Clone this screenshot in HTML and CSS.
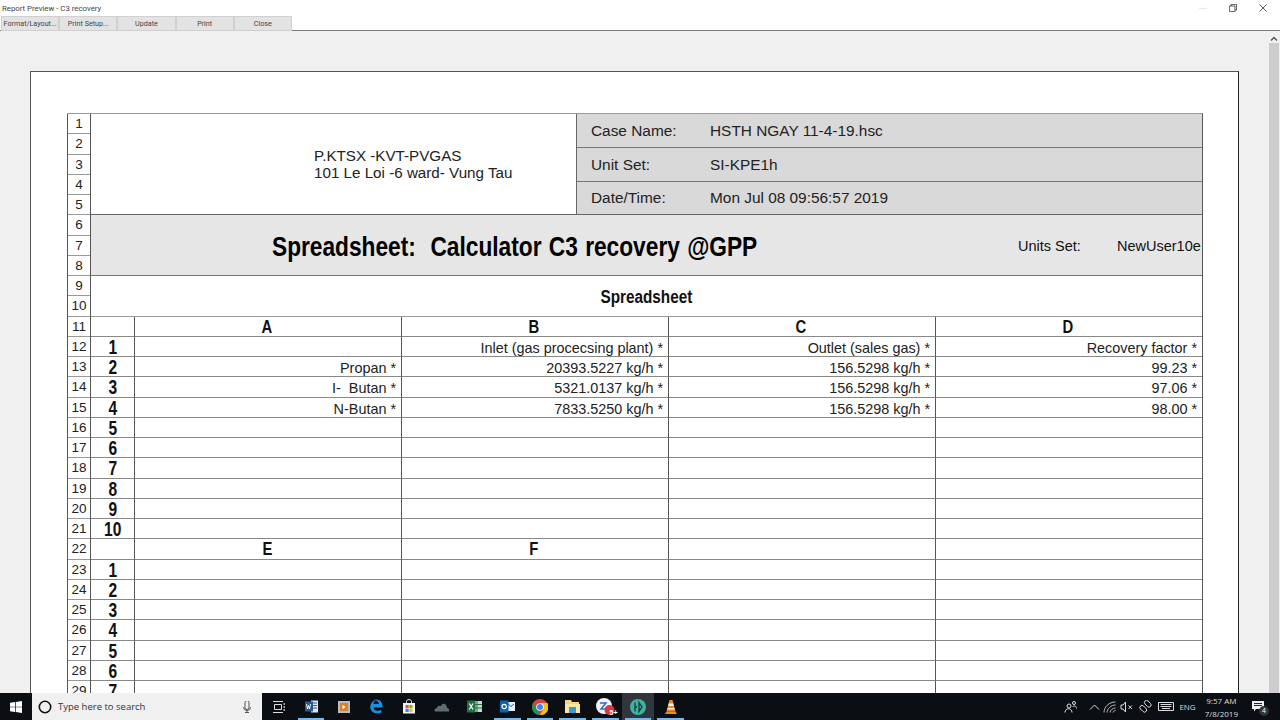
FILE: index.html
```html
<!DOCTYPE html>
<html lang="en">

<head>
    <meta charset="UTF-8">
    <title>Report Preview - C3 recovery</title>
    <link rel="stylesheet" href="styles.css">
</head>

<body>
    <div class="titlebar">
        <span class="title-text">Report Preview - C3 recovery</span>
        <div class="win-btns">
            <svg width="10" height="10" viewBox="0 0 10 10"><path d="M0 5.500h10" stroke="#ddd" fill="none"/></svg>
            <svg width="10" height="10" viewBox="0 0 10 10"><path d="M.5 2.500h7v7h-7zM2.500 2.500v-2h7v7h-2" stroke="#333" fill="none"/></svg>
            <svg width="10" height="10" viewBox="0 0 10 10"><path d="M.5.5l9 9M9.500.5l-9 9" stroke="#333" fill="none"/></svg>
        </div>
    </div>

    <div class="toolbar">
        <button class="tool-btn">Format/Layout...</button>
        <button class="tool-btn">Print Setup...</button>
        <button class="tool-btn">Update</button>
        <button class="tool-btn">Print</button>
        <button class="tool-btn">Close</button>
    </div>

    <div class="workspace">
        <div class="page">
            <div class="sheet">
                <div class="rownums">
                    <div>1</div><div>2</div><div>3</div><div>4</div><div>5</div>
                    <div>6</div><div>7</div><div>8</div><div>9</div><div>10</div>
                    <div>11</div><div>12</div><div>13</div><div>14</div><div>15</div>
                    <div>16</div><div>17</div><div>18</div><div>19</div><div>20</div>
                    <div>21</div><div>22</div><div>23</div><div>24</div><div>25</div>
                    <div>26</div><div>27</div><div>28</div><div>29</div>
                </div>
                <div class="content">
                    <div class="head-block">
                        <div class="company">P.KTSX -KVT-PVGAS<br>101 Le Loi -6 ward- Vung Tau</div>
                        <div class="case-info">
                            <div class="case-row"><span class="case-label">Case Name:</span><span>HSTH NGAY 11-4-19.hsc</span></div>
                            <div class="case-row"><span class="case-label">Unit Set:</span><span>SI-KPE1h</span></div>
                            <div class="case-row"><span class="case-label">Date/Time:</span><span>Mon Jul 08 09:56:57 2019</span></div>
                        </div>
                    </div>
                    <div class="title-band">
                        <div class="report-title">Spreadsheet:&nbsp; Calculator C3 recovery @GPP</div>
                        <div class="units-label">Units Set:</div>
                        <div class="units-value">NewUser10e</div>
                    </div>
                    <div class="section-title"><span>Spreadsheet</span></div>

                    <div class="grid">
                        <div class="idx"></div><div class="colhead"><span>A</span></div><div class="colhead"><span>B</span></div><div class="colhead"><span>C</span></div><div class="colhead"><span>D</span></div>
                        <div class="idx"><span>1</span></div><div class="cell"></div><div class="cell">Inlet (gas procecsing plant) *</div><div class="cell">Outlet (sales gas) *</div><div class="cell">Recovery factor *</div>
                        <div class="idx"><span>2</span></div><div class="cell">Propan *</div><div class="cell">20393.5227 kg/h *</div><div class="cell">156.5298 kg/h *</div><div class="cell">99.23 *</div>
                        <div class="idx"><span>3</span></div><div class="cell">I-&nbsp; Butan *</div><div class="cell">5321.0137 kg/h *</div><div class="cell">156.5298 kg/h *</div><div class="cell">97.06 *</div>
                        <div class="idx"><span>4</span></div><div class="cell">N-Butan *</div><div class="cell">7833.5250 kg/h *</div><div class="cell">156.5298 kg/h *</div><div class="cell">98.00 *</div>
                        <div class="idx"><span>5</span></div><div class="cell"></div><div class="cell"></div><div class="cell"></div><div class="cell"></div>
                        <div class="idx"><span>6</span></div><div class="cell"></div><div class="cell"></div><div class="cell"></div><div class="cell"></div>
                        <div class="idx"><span>7</span></div><div class="cell"></div><div class="cell"></div><div class="cell"></div><div class="cell"></div>
                        <div class="idx"><span>8</span></div><div class="cell"></div><div class="cell"></div><div class="cell"></div><div class="cell"></div>
                        <div class="idx"><span>9</span></div><div class="cell"></div><div class="cell"></div><div class="cell"></div><div class="cell"></div>
                        <div class="idx"><span>10</span></div><div class="cell"></div><div class="cell"></div><div class="cell"></div><div class="cell"></div>
                        <div class="idx"></div><div class="colhead"><span>E</span></div><div class="colhead"><span>F</span></div><div class="colhead"></div><div class="colhead"></div>
                        <div class="idx"><span>1</span></div><div class="cell"></div><div class="cell"></div><div class="cell"></div><div class="cell"></div>
                        <div class="idx"><span>2</span></div><div class="cell"></div><div class="cell"></div><div class="cell"></div><div class="cell"></div>
                        <div class="idx"><span>3</span></div><div class="cell"></div><div class="cell"></div><div class="cell"></div><div class="cell"></div>
                        <div class="idx"><span>4</span></div><div class="cell"></div><div class="cell"></div><div class="cell"></div><div class="cell"></div>
                        <div class="idx"><span>5</span></div><div class="cell"></div><div class="cell"></div><div class="cell"></div><div class="cell"></div>
                        <div class="idx"><span>6</span></div><div class="cell"></div><div class="cell"></div><div class="cell"></div><div class="cell"></div>
                        <div class="idx"><span>7</span></div><div class="cell"></div><div class="cell"></div><div class="cell"></div><div class="cell"></div>
                    </div>
                </div>
            </div>
        </div>
        <div class="scrollbar">
            <svg width="8" height="6" viewBox="0 0 8 6"><path d="M1 4.500l3-3 3 3" stroke="#505050" stroke-width="1.300" fill="none"/></svg>
            <div class="scroll-thumb"></div>
        </div>
    </div>

    <div class="taskbar">
        <div class="start">
            <svg width="12" height="12" viewBox="0 0 12 12"><path d="M0 1.700l5-.7v4.700H0zM5.700.9L12 0v5.700H5.700zM0 6.300h5V11l-5-.7zM5.700 6.300H12V12l-6.300-.9z" fill="#fff"/></svg>
        </div>
        <div class="searchbox">
            <svg width="14" height="14" viewBox="0 0 14 14"><circle cx="7" cy="7" r="5.700" stroke="#111" stroke-width="1.600" fill="none"/></svg>
            <span class="search-text">Type here to search</span>
            <svg class="mic" width="8" height="12" viewBox="0 0 8 12"><path d="M2 1.500a2 2 0 0 1 4 0v5a2 2 0 0 1-4 0zM.5 6a3.500 3.500 0 0 0 7 0M4 9.500V12M2 11.500h4" stroke="#555" fill="none"/></svg>
        </div>
        <div class="task-icons">
            <div class="task-icon">
                <svg width="13" height="12" viewBox="0 0 13 12"><path d="M2.500 3.500h7v5h-7zM1 .5h10M1 11.500h10" stroke="#ddd" fill="none"/><path d="M11.500 3h1.500M11.500 6h1.500M11.500 9h1.500" stroke="#ddd" stroke-width="1.500"/></svg>
            </div>
            <div class="task-icon running">
                <svg width="15" height="15" viewBox="0 0 15 15"><path d="M7 1.500h7v12H7z" fill="#dfe7f3"/><path d="M9 4h4M9 6.500h4M9 9h4" stroke="#2b579a"/><path d="M1 2.500h8v10H1z" fill="#2b579a"/><path d="M2.500 5l1 5 1-3.500 1 3.500 1-5" stroke="#fff" fill="none" stroke-width=".9"/></svg>
            </div>
            <div class="task-icon">
                <svg width="14" height="14" viewBox="0 0 14 14"><path d="M1 1h12v12H1z" fill="#b7bcc4"/><path d="M3 3h8v8H3z" fill="#d97f28"/><path d="M5.500 4.800l3 2.200-3 2.200z" fill="#fff"/></svg>
            </div>
            <div class="task-icon">
                <svg width="15" height="15" viewBox="0 0 15 15"><path d="M13.500 8.500h-9c.2 3.300 4.900 4.100 7.800 2.200v2.700c-4.300 2-10.600.6-11-5 0-3.600 2-6.400 5.400-7.300-1.500 1.200-2.100 2.500-2.300 4h5.600C9.700 2.700 7.200.8 3.900 1.500 9.200-1.300 14.200 2.500 13.500 8.500z" fill="#1e90e0"/></svg>
            </div>
            <div class="task-icon">
                <svg width="14" height="15" viewBox="0 0 14 15"><path d="M1 4h12v10.500H1z" fill="#f3f3f3"/><path d="M4.500 4V2.500a2.500 2 0 0 1 5 0V4" stroke="#ddd" fill="none"/><path d="M3.500 6h3.200v3.200H3.500z" fill="#f25022"/><path d="M7.300 6h3.200v3.200H7.300z" fill="#7fba00"/><path d="M3.500 9.800h3.200V13H3.500z" fill="#00a4ef"/><path d="M7.300 9.800h3.200V13H7.300z" fill="#ffb900"/></svg>
            </div>
            <div class="task-icon">
                <svg width="16" height="10" viewBox="0 0 16 10"><path d="M1 9.500c-1.200-1.500 0-3.500 1.700-3.200C3 3.800 5.500 3 6.700 4.300 7.500 1.500 11 .8 12.300 3.500c.8 1.300.5 2 .4 2.300 1.800-.2 3 2.300 2.300 3.700z" fill="#5f6b75"/></svg>
            </div>
            <div class="task-icon">
                <svg width="15" height="15" viewBox="0 0 15 15"><path d="M6 2h9v11H6z" fill="#c5dcc9"/><path d="M10 2v11M6 5.500h9M6 9h9" stroke="#217346"/><path d="M0 1.500h8.500v12H0z" fill="#217346"/><path d="M2.300 4.500l3.800 6M6.100 4.500l-3.800 6" stroke="#fff" stroke-width="1.200"/></svg>
            </div>
            <div class="task-icon running">
                <svg width="15" height="15" viewBox="0 0 15 15"><path d="M6 3h9v9H6z" fill="#e8eef7"/><path d="M8 5l3 2.500L14 5" stroke="#0a64ad" fill="none"/><path d="M0 1.500h8.500v12H0z" fill="#0a64ad"/><circle cx="4.200" cy="7.500" r="2.200" stroke="#fff" stroke-width="1.200" fill="none"/></svg>
            </div>
            <div class="task-icon running">
                <svg width="16" height="16" viewBox="0 0 16 16"><circle cx="8" cy="8" r="8" fill="#db4437"/><path d="M8 4h7.500A8 8 0 0 1 8 16l3.500-6z" fill="#f4c20d"/><path d="M8 16A8 8 0 0 1 1.100 4l3.500 6z" fill="#0f9d58"/><circle cx="8" cy="8" r="3.800" fill="#fff"/><circle cx="8" cy="8" r="3" fill="#4285f4"/></svg>
            </div>
            <div class="task-icon running">
                <svg width="15" height="13" viewBox="0 0 15 13"><path d="M0 0h6l1 2h7v11H0z" fill="#f5d479"/><path d="M0 4h15v9H0z" fill="#fbe7a2"/><path d="M4 7h7v6H4z" fill="#3a9bd5"/></svg>
            </div>
            <div class="task-icon running">
                <svg width="19" height="18" viewBox="0 0 19 18"><circle cx="8" cy="8" r="8" fill="#f1f4fb"/><path d="M4 5h6L5 11h6" stroke="#2f67c9" stroke-width="1.500" fill="none"/><circle cx="13.500" cy="12" r="5" fill="#d9363e"/></svg>
                <span class="zalo-badge">5+</span>
            </div>
            <div class="task-icon running active">
                <svg width="16" height="16" viewBox="0 0 16 16"><circle cx="8" cy="8" r="8" fill="#3eb3a0"/><path d="M5 3.500v9M5 8h2M9 3.500l3 4.500-3 4.500z" stroke="#10393a" stroke-width="1.300" fill="none"/></svg>
            </div>
            <div class="task-icon running">
                <svg width="14" height="16" viewBox="0 0 14 16"><path d="M1 15h12l-1.500-2.500h-9z" fill="#f08a1d"/><path d="M5.500 1h3l3 11.500h-9z" fill="#f08a1d"/><path d="M4.700 4.500h4.600l.5 2.500H4.200zM3.600 9h6.800l.4 1.500H3.200z" fill="#eee"/></svg>
            </div>
        </div>
        <div class="tray">
            <svg class="tray-people" width="13" height="13" viewBox="0 0 13 13"><circle cx="5" cy="6" r="2" stroke="#ddd" fill="none"/><circle cx="10" cy="3" r="1.500" stroke="#ddd" fill="none"/><path d="M1 12.500c0-5 7-5 7 0M8.500 7c1.500-2 4-1 4 1.500" stroke="#ddd" fill="none"/></svg>
            <svg class="tray-up" width="11" height="6" viewBox="0 0 11 6"><path d="M1 5.500l4.500-4.500 4.500 4.500" stroke="#ddd" fill="none"/></svg>
            <svg class="tray-net" width="13" height="12" viewBox="0 0 13 12"><path d="M1 11.500C1 6 6 1 12.500 1M4 11.500C4 8 8 4 12.500 4M7 11.500c0-2 2.500-4.500 5.500-4.500M10 11.500c0-.8 1.200-2 2.500-2" stroke="#bbb" fill="none"/></svg>
            <svg class="tray-sound" width="14" height="12" viewBox="0 0 14 12"><path d="M1 4h2l2.500-3v10L3 8H1z" stroke="#ddd" fill="none"/><path d="M8.500 4.500l3.500 3.500M12 4.500l-3.500 3.500" stroke="#ddd"/></svg>
            <svg class="tray-link" width="13" height="13" viewBox="0 0 13 13"><path d="M1.500 9a2.100 2.100 0 0 1 3-3l2.500 2.500a2.100 2.100 0 0 1-3 3zM6 4a2.100 2.100 0 0 1 3-3l2.500 2.500a2.100 2.100 0 0 1-3 3z" stroke="#ddd" fill="none"/></svg>
            <svg class="tray-keys" width="16" height="9" viewBox="0 0 16 9"><path d="M.5.500h15v8H.5z" stroke="#ddd" fill="none"/><path d="M2.500 2.500h11M2.500 4.500h11M4 6.500h8" stroke="#ddd"/></svg>
            <span class="lang">ENG</span>
            <div class="clock"><div>9:57 AM</div><div>7/8/2019</div></div>
            <div class="notif">
                <svg width="12" height="11" viewBox="0 0 12 11"><path d="M0 0h12v8H4L2 10.500V8H0z" fill="#eee"/><path d="M2 2.500h8M2 4.500h8" stroke="#222"/></svg>
                <span class="notif-count">4</span>
            </div>
        </div>
    </div>
</body>

</html>
```

FILE: styles.css
```css
html,
body {
    margin: 0;
    padding: 0;
    height: 100%;
    overflow: hidden;
}

body {
    display: flex;
    flex-direction: column;
    font-family: "Liberation Sans", Arial, sans-serif;
    background-color: #fff;
}

.titlebar {
    height: 16px;
    flex: none;
    display: flex;
    justify-content: space-between;
    align-items: center;
}

.title-text {
    font-family: Roboto, sans-serif;
    font-size: 7.8px;
    color: #444;
    padding-left: 2px;
}

.win-btns {
    display: flex;
    gap: 22px;
    padding-right: 13px;
    align-items: center;
    height: 14px;
}

.win-btns svg {
    width: 8px;
    height: 8px;
}

.toolbar {
    height: 14px;
    flex: none;
    display: flex;
    padding-left: 1px;
    border-bottom: 1px solid #7a7a7a;
}

.tool-btn {
    width: 58.2px;
    height: 15px;
    padding: 0;
    font-family: Roboto, sans-serif;
    font-size: 7.2px;
    color: #444;
    background-color: #e3e3e3;
    border: 1px solid #d0d0d0;
    border-radius: 0;
}

.workspace {
    flex: 1;
    min-height: 0;
    display: flex;
    background-color: #f0f0f0;
    overflow: hidden;
}

.page {
    flex: none;
    width: 1209px;
    margin: 40px 0 0 30px;
    box-sizing: border-box;
    padding: 41px 0 0 36px;
    background-color: #fff;
    border: 1px solid #222;
    border-top-color: #555;
    border-left-color: #555;
    border-bottom: none;
}

.scrollbar {
    margin-left: auto;
    margin-right: 1px;
    width: 10px;
    display: flex;
    flex-direction: column;
    align-items: center;
}

.scrollbar svg {
    margin-top: 5px;
    flex: none;
}

.scroll-thumb {
    margin-top: 1px;
    width: 100%;
    flex: 1;
    background-color: #cdcdcd;
}

.sheet {
    width: 1136px;
    display: flex;
    border-top: 1px solid #999;
    border-right: 1px solid #555;
    box-sizing: border-box;
}

.rownums {
    width: 24px;
    flex: none;
    border-left: 1px solid #555;
    border-right: 1px solid #555;
    box-sizing: border-box;
}

.rownums div {
    height: 20.25px;
    box-sizing: border-box;
    border-bottom: 1px solid #999;
    font-size: 13.5px;
    line-height: 19px;
    text-align: center;
    color: #222;
}

.content {
    flex: 1;
    min-width: 0;
}

.head-block {
    height: 101.25px;
    display: flex;
    box-sizing: border-box;
    border-bottom: 1px solid #666;
}

.company {
    width: 485px;
    flex: none;
    box-sizing: border-box;
    padding: 33px 0 0 223px;
    font-size: 15.2px;
    line-height: 17px;
    color: #222;
}

.case-info {
    flex: 1;
    display: flex;
    flex-direction: column;
    background-color: #d9d9d9;
    border-left: 1px solid #666;
}

.case-row {
    flex: 1;
    display: flex;
    align-items: center;
    padding-left: 14px;
    padding-top: 1px;
    font-size: 15.4px;
    color: #222;
    border-bottom: 1px solid #777;
}

.case-row:last-child {
    border-bottom: none;
}

.case-label {
    width: 119px;
}

.title-band {
    height: 60.75px;
    display: flex;
    align-items: center;
    box-sizing: border-box;
    padding-top: 2px;
    background-color: #e6e6e6;
    border-bottom: 1px solid #777;
    color: #111;
}

.report-title {
    width: 485px;
    margin-left: 181px;
    margin-top: 2px;
    white-space: pre;
    font-size: 27.6px;
    font-weight: bold;
    word-spacing: 1.2px;
    color: #000;
    flex: none;
    transform: scaleX(0.823);
    transform-origin: left center;
}

.units-label {
    margin-left: 261px;
    width: 99px;
    flex: none;
    font-size: 14.5px;
}

.units-value {
    font-size: 14.5px;
    white-space: nowrap;
}

.section-title {
    height: 40.5px;
    box-sizing: border-box;
    border-bottom: 1px solid #999;
    text-align: center;
    font-size: 18.8px;
    line-height: 42px;
    font-weight: bold;
    color: #111;
}

.section-title span,
.idx span,
.colhead span {
    display: inline-block;
}

.section-title span {
    transform: scaleX(0.814);
}

.grid {
    display: grid;
    grid-template-columns: 43px repeat(4, 1fr);
    grid-auto-rows: 20.25px;
}

.idx,
.colhead,
.cell {
    box-sizing: border-box;
    border-bottom: 1px solid #888;
}

.idx {
    font-size: 21px;
    line-height: 20px;
    font-weight: bold;
    text-align: center;
    color: #111;
}

.idx span {
    transform: scaleX(0.74);
}

.colhead {
    font-size: 19px;
    line-height: 19px;
    font-weight: bold;
    text-align: center;
    padding-right: 2px;
    color: #111;
    border-left: 1px solid #555;
}

.colhead span {
    transform: scaleX(0.78);
}

.cell {
    font-size: 14.4px;
    line-height: 22px;
    text-align: right;
    padding-right: 5px;
    color: #222;
    border-left: 1px solid #555;
    white-space: pre;
}

.taskbar {
    height: 27px;
    flex: none;
    display: flex;
    align-items: center;
    background-color: #0b0f14;
    position: relative;
}

.start {
    width: 32px;
    height: 100%;
    flex: none;
    display: flex;
    align-items: center;
    justify-content: center;
}

.searchbox {
    width: 230px;
    height: 100%;
    flex: none;
    display: flex;
    align-items: center;
    background-color: #f0f0f0;
    box-sizing: border-box;
    padding-left: 6px;
}

.search-text {
    margin-left: 6px;
    font-family: "Open Sans", sans-serif;
    font-size: 9.5px;
    color: #333;
}

.mic {
    margin-left: auto;
    margin-right: 11px;
}

.task-icons {
    display: flex;
    height: 100%;
}

.task-icon {
    width: 32.7px;
    height: 100%;
    flex: none;
    display: flex;
    align-items: center;
    justify-content: center;
    box-sizing: border-box;
    position: relative;
}

.task-icon.running::after {
    content: "";
    position: absolute;
    left: 3px;
    right: 3px;
    bottom: 0;
    height: 2px;
    background-color: #76b9ed;
}

.task-icon.active {
    background-color: #30363b;
}

.zalo-badge {
    position: absolute;
    right: 4px;
    bottom: 4px;
    font-size: 7px;
    font-weight: bold;
    color: #fff;
}

.tray {
    margin-left: auto;
    height: 100%;
    display: flex;
    align-items: center;
    padding-right: 16px;
    color: #ddd;
}

.tray-up {
    margin-left: 12px;
}

.tray-net {
    margin-left: 3px;
}

.tray-sound {
    margin-left: 4px;
}

.tray-link {
    margin-left: 5px;
}

.tray-keys {
    margin-left: 6px;
}

.lang {
    margin-left: 5px;
    font-family: "Open Sans", sans-serif;
    font-size: 8px;
}

.clock {
    margin-left: 9px;
    font-family: "Open Sans", sans-serif;
    font-size: 8px;
    line-height: 13px;
    text-align: center;
}

.notif {
    position: relative;
    margin-left: 14px;
    display: flex;
}

.notif-count {
    position: absolute;
    right: -5px;
    bottom: -4px;
    width: 10px;
    height: 10px;
    border-radius: 50%;
    background-color: #333;
    font-size: 7px;
    line-height: 10px;
    text-align: center;
    color: #fff;
}
```
